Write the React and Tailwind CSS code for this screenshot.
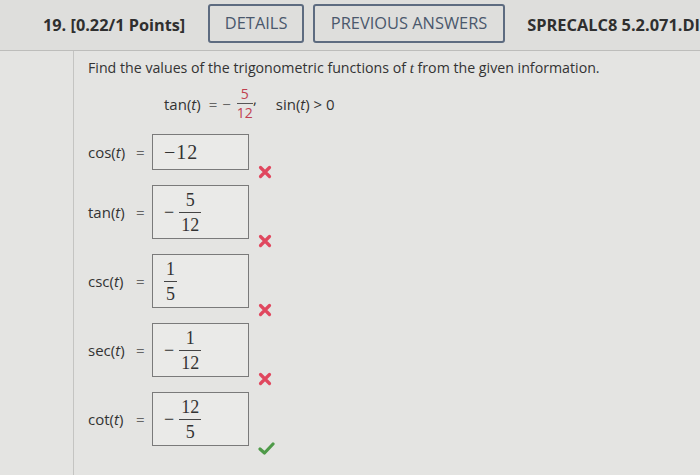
import React from 'react';

const sans = { fontFamily: '"Open Sans", "Liberation Sans", sans-serif' };
const serif = { fontFamily: '"Liberation Serif", "DejaVu Serif", serif' };

function Cross() {
    return (
        <svg width="14" height="14" viewBox="0 0 14 14">
            <path d="M2.5 2.5 L11.5 11.5 M11.5 2.5 L2.5 11.5" stroke="#e0475e" strokeWidth="3.2" strokeLinecap="round" />
        </svg>
    );
}

function Check() {
    return (
        <svg width="17" height="13" viewBox="0 0 17 13">
            <path d="M2 7 L6.5 11 L15 2" stroke="#4e9a48" strokeWidth="3.2" fill="none" strokeLinecap="round" strokeLinejoin="round" />
        </svg>
    );
}

// serif stacked fraction used inside the answer boxes
function Frac({ num, den }) {
    return (
        <span className="inline-flex flex-col items-center leading-none text-[18px]" style={serif}>
            <span className="px-[2px] pb-[3px]">{num}</span>
            <span className="w-full h-px bg-[#444]"></span>
            <span className="px-[2px] pt-[3px]">{den}</span>
        </span>
    );
}

function AnswerRow({ label, children, correct, tall }) {
    return (
        <div className="flex items-center">
            <div className="w-[64px] text-[15px] text-[#333] flex" style={sans}>
                <span className="w-[48px]">{label}</span>
                <span className="text-[#666]">=</span>
            </div>
            <div className={`w-[97px] ${tall ? 'h-[54px]' : 'h-[36px]'} border-[1.5px] border-[#7a7a7a] bg-[#eaeae8] flex items-center pl-[11px] text-[#333]`}>
                {children}
            </div>
            <div className="self-end mb-[-9px] ml-[9px]">
                {correct ? <Check /> : <Cross />}
            </div>
        </div>
    );
}

export default function App() {
    return (
        <div className="w-[700px] h-[475px] overflow-hidden bg-[#e4e4e2] text-[#333]" style={sans}>
            {/* Header */}
            <div className="h-[51px] flex items-center border-b border-[#bdbdbb] bg-[#dededc] whitespace-nowrap">
                <div className="pl-[43px] w-[209px] font-bold text-[16.3px] text-[#2f2f2f]">19. [0.22/1 Points]</div>
                <div className="h-[39px] w-[96px] border-2 border-[#5d6b80] rounded-[3px] flex items-center justify-center text-[16.4px] text-[#4a586c] mb-[3px]">DETAILS</div>
                <div className="h-[39px] w-[193px] ml-[9px] border-2 border-[#5d6b80] rounded-[3px] flex items-center justify-center text-[16.4px] text-[#4a586c] mb-[3px]">PREVIOUS ANSWERS</div>
                <div className="ml-[22px] font-bold text-[16.4px] text-[#2f2f2f]">SPRECALC8 5.2.071.DI</div>
            </div>

            <div className="flex h-[424px]">
                <div className="w-[74px] border-r border-[#c4c4c2] shrink-0"></div>

                <div className="pl-[14px] pt-[6px]">
                    <p className="text-[14.2px] text-[#333] whitespace-nowrap">
                        Find the values of the trigonometric functions of <i style={serif} className="text-[15px]">t</i> from the given information.
                    </p>

                    {/* Given */}
                    <div className="flex items-center ml-[76px] mt-[7px] text-[15px] whitespace-nowrap">
                        <span>tan(<i>t</i>)</span>
                        <span className="ml-[8px] text-[#666]">=</span>
                        <span className="ml-[5px] text-[#666]">−</span>
                        <span className="inline-flex flex-col items-center leading-none text-[14px] text-[#c04050] ml-[6px]">
                            <span className="pb-[2px]">5</span>
                            <span className="w-full h-px bg-[#555]"></span>
                            <span className="pt-[2px]">12</span>
                        </span>
                        <span className="self-end mb-[12px]">,</span>
                        <span className="ml-[19px]">sin(<i>t</i>) &gt; 0</span>
                    </div>

                    <div className="flex flex-col gap-[15px] mt-[13px]">
                        <AnswerRow label={<>cos(<i>t</i>)</>}>
                            <span className="text-[20px] tracking-[1px]" style={serif}>−12</span>
                        </AnswerRow>
                        <AnswerRow label={<>tan(<i>t</i>)</>} tall>
                            <span className="text-[18px] mr-[5px]" style={serif}>−</span>
                            <Frac num="5" den="12" />
                        </AnswerRow>
                        <AnswerRow label={<>csc(<i>t</i>)</>} tall>
                            <Frac num="1" den="5" />
                        </AnswerRow>
                        <AnswerRow label={<>sec(<i>t</i>)</>} tall>
                            <span className="text-[18px] mr-[5px]" style={serif}>−</span>
                            <Frac num="1" den="12" />
                        </AnswerRow>
                        <AnswerRow label={<>cot(<i>t</i>)</>} tall correct>
                            <span className="text-[18px] mr-[5px]" style={serif}>−</span>
                            <Frac num="12" den="5" />
                        </AnswerRow>
                    </div>
                </div>
            </div>
        </div>
    );
}
